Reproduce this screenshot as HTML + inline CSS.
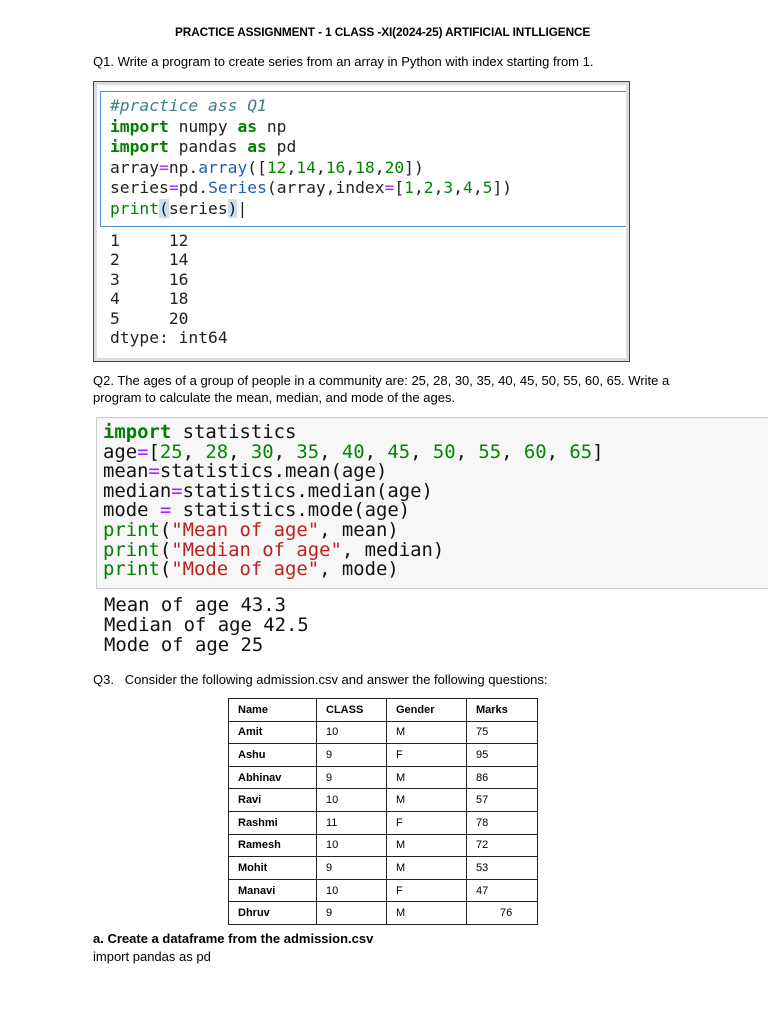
<!DOCTYPE html>
<html><head><meta charset="utf-8"><style>
body{margin:0;width:768px;height:1024px;background:#fff;position:relative;overflow:hidden;font-family:"Liberation Sans",sans-serif;color:#000}
.t{position:absolute;white-space:nowrap;line-height:1}
.m{font-family:"DejaVu Sans Mono","Liberation Mono",monospace;white-space:pre;position:absolute;color:#222}
.k{color:#008000;font-weight:bold}.g{color:#008000}.c{color:#408080;font-style:italic}.b{color:#1a5fb4}.p{color:#aa22ff}.s{color:#ba2121}.n{color:#080}
table{position:absolute;left:228px;top:698px;border-collapse:collapse;font-size:11px}
td{border:1.5px solid #222;padding:0 0 0 9px;height:21.6px}
td:first-child{font-weight:bold}
</style></head><body>
<div class="t" style="left:175px;top:27px;font-size:11.8px;font-weight:bold;letter-spacing:-0.1px">PRACTICE ASSIGNMENT - 1 CLASS -XI(2024-25) ARTIFICIAL INTLLIGENCE</div>
<div class="t" style="left:93px;top:55px;font-size:13px">Q1. Write a program to create series from an array in Python with index starting from 1.</div>

<div style="position:absolute;left:93px;top:81px;width:535px;height:279px;border:1.5px solid #444;box-shadow:inset 0 0 0 3px #ddd"></div>
<div style="position:absolute;left:100px;top:91px;width:525px;height:134px;border:1.5px solid #4a90d9;border-right:none"></div>
<div class="m" style="left:110px;top:96px;font-size:16.3px;line-height:20.6px"><span class="c">#practice ass Q1</span>
<span class="k">import</span> numpy <span class="k">as</span> np
<span class="k">import</span> pandas <span class="k">as</span> pd
array<span class="p">=</span>np.<span class="b">array</span>([<span class="n">12</span>,<span class="n">14</span>,<span class="n">16</span>,<span class="n">18</span>,<span class="n">20</span>])
series<span class="p">=</span>pd.<span class="b">Series</span>(array,index<span class="p">=</span>[<span class="n">1</span>,<span class="n">2</span>,<span class="n">3</span>,<span class="n">4</span>,<span class="n">5</span>])
<span class="g">print</span><span style="background:#cde">(</span>series<span style="background:#cde">)</span>|</div>
<div class="m" style="left:110px;top:231px;font-size:16.3px;line-height:19.4px">1     12
2     14
3     16
4     18
5     20
dtype: int64</div>

<div class="t" style="left:93px;top:374px;font-size:13px">Q2. The ages of a group of people in a community are: 25, 28, 30, 35, 40, 45, 50, 55, 60, 65. Write a</div>
<div class="t" style="left:93px;top:391px;font-size:13px">program to calculate the mean, median, and mode of the ages.</div>

<div style="position:absolute;left:96px;top:417px;width:680px;height:170px;background:#f7f7f7;border:1px solid #ccc"></div>
<div class="m" style="left:103px;top:423px;font-size:18.9px;line-height:19.6px;color:#111"><span class="k">import</span> statistics
age<span class="p">=</span>[<span class="n">25</span>, <span class="n">28</span>, <span class="n">30</span>, <span class="n">35</span>, <span class="n">40</span>, <span class="n">45</span>, <span class="n">50</span>, <span class="n">55</span>, <span class="n">60</span>, <span class="n">65</span>]
mean<span class="p">=</span>statistics.mean(age)
median<span class="p">=</span>statistics.median(age)
mode <span class="p">=</span> statistics.mode(age)
<span class="g">print</span>(<span class="s">"Mean of age"</span>, mean)
<span class="g">print</span>(<span class="s">"Median of age"</span>, median)
<span class="g">print</span>(<span class="s">"Mode of age"</span>, mode)</div>
<div class="m" style="left:104px;top:595px;font-size:18.9px;line-height:20px;color:#111">Mean of age 43.3
Median of age 42.5
Mode of age 25</div>

<div class="t" style="left:93px;top:673px;font-size:13px">Q3.&nbsp;&nbsp; Consider the following admission.csv and answer the following questions:</div>

<table>
<tr><td style="width:78px">Name</td><td style="width:60px;font-weight:bold">CLASS</td><td style="width:70px;font-weight:bold">Gender</td><td style="width:61px;font-weight:bold">Marks</td></tr>
<tr><td>Amit</td><td>10</td><td>M</td><td>75</td></tr>
<tr><td>Ashu</td><td>9</td><td>F</td><td>95</td></tr>
<tr><td>Abhinav</td><td>9</td><td>M</td><td>86</td></tr>
<tr><td>Ravi</td><td>10</td><td>M</td><td>57</td></tr>
<tr><td>Rashmi</td><td>11</td><td>F</td><td>78</td></tr>
<tr><td>Ramesh</td><td>10</td><td>M</td><td>72</td></tr>
<tr><td>Mohit</td><td>9</td><td>M</td><td>53</td></tr>
<tr><td>Manavi</td><td>10</td><td>F</td><td>47</td></tr>
<tr><td>Dhruv</td><td>9</td><td>M</td><td style="padding-left:33px">76</td></tr>
</table>

<div class="t" style="left:93px;top:932px;font-size:13px;font-weight:bold">a. Create a dataframe from the admission.csv</div>
<div class="t" style="left:93px;top:950px;font-size:13px">import pandas as pd</div>
</body></html>
